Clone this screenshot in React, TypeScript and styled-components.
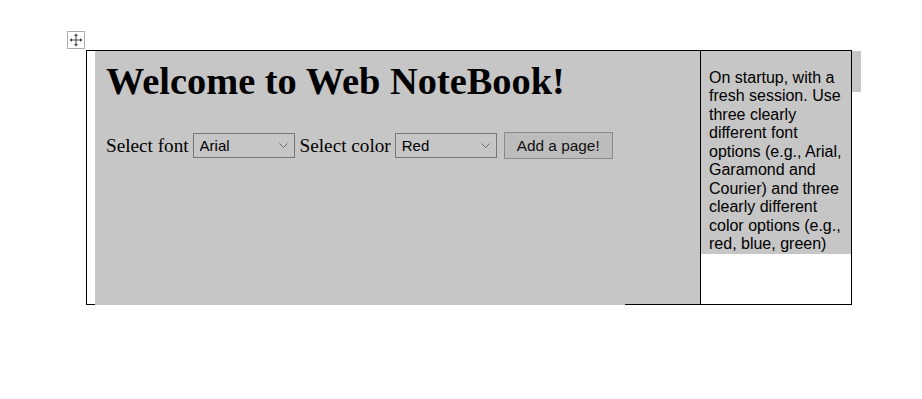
import React from 'react';
import styled, { createGlobalStyle } from 'styled-components';

const GlobalStyle = createGlobalStyle`
  body {
    margin: 8px;
    background: #ffffff;
    font-family: 'Liberation Serif', 'Times New Roman', serif;
    color: #000;
  }
`;

const panelGray = '#c6c6c6';

const Page = styled.div`
  padding: 23px 0 0 59px;
`;

const MoveHandle = styled.div`
  width: 16px;
  height: 16px;
  border: 1px solid #ababab;
  background: #fff;
  display: flex;
  align-items: center;
  justify-content: center;
`;

const Frame = styled.div`
  margin: 1px 0 0 19px;
  width: 764px;
  height: 253px;
  border: 1px solid #000;
  display: flex;
`;

const MainCell = styled.div`
  width: 605px;
  padding-left: 8px;
  display: flex;
`;

const Panel = styled.div`
  flex: 1;
  background: ${panelGray};
  display: flex;
  flex-direction: column;
`;

const Body = styled.div`
  flex: 1;
  padding: 0 11px;
`;

const Title = styled.h1`
  margin: 8px 0 0;
  font-size: 38.4px;
  font-weight: 700;
  line-height: normal;
`;

const Controls = styled.div`
  margin-top: 29px;
  display: flex;
  align-items: center;
  font-size: 19.2px;
  white-space: pre;
`;

const Label = styled.span`
  margin-right: 4px;
`;

const SelectWrap = styled.span<{ $gap: number }>`
  position: relative;
  display: inline-flex;
  margin-right: ${({ $gap }) => $gap}px;
`;

const NativeSelect = styled.select`
  appearance: none;
  width: 102px;
  height: 25px;
  padding: 0 0 0 6px;
  border: 1px solid #767676;
  border-radius: 0;
  background: transparent;
  font-family: 'Liberation Sans', Arial, sans-serif;
  font-size: 15px;
  color: #000;
`;

const Chevron = styled.svg`
  position: absolute;
  right: 7px;
  top: 10px;
  pointer-events: none;
`;

const Button = styled.button`
  width: 109px;
  height: 27px;
  border: 1px solid #8a8a8a;
  background: #bcbcbc;
  font-family: 'Liberation Sans', Arial, sans-serif;
  font-size: 15.4px;
  color: #111;
  padding: 0;
`;

const PageEdge = styled.div`
  width: 530px;
  height: 1px;
  margin-bottom: -1px;
  background: ${panelGray};
`;

const SideCell = styled.div`
  width: 150px;
  border-left: 1px solid #000;
  display: flex;
  flex-direction: column;
  align-items: flex-start;
`;

const Overhang = styled.div`
  position: relative;
  z-index: -1;
  width: 160px;
  height: 41px;
  margin-bottom: -41px;
  background: ${panelGray};
`;

const Note = styled.p`
  margin: 0;
  width: 136px;
  padding: 18px 6px 0 8px;
  background: ${panelGray};
  font-family: 'Liberation Sans', Arial, sans-serif;
  font-size: 16px;
  line-height: 18.45px;
`;

const Select: React.FC<{ options: string[]; gap: number }> = ({ options, gap }) => (
  <SelectWrap $gap={gap}>
    <NativeSelect defaultValue={options[0]}>
      {options.map((o) => (
        <option key={o}>{o}</option>
      ))}
    </NativeSelect>
    <Chevron width="9" height="5" viewBox="0 0 9 5">
      <path d="M0.5 0.5 L4.5 4.5 L8.5 0.5" fill="none" stroke="#6b6b6b" strokeWidth="1" />
    </Chevron>
  </SelectWrap>
);

export default function App() {
  return (
    <Page>
      <GlobalStyle />
      <MoveHandle>
        <svg width="14" height="14" viewBox="0 0 14 14">
          <g fill="none" stroke="#444" strokeWidth="1">
            <path d="M7 1.5 V12.5 M1.5 7 H12.5" />
          </g>
          <g fill="#444">
            <path d="M7 0.5 L9 3 H5 Z" />
            <path d="M7 13.5 L9 11 H5 Z" />
            <path d="M0.5 7 L3 5 V9 Z" />
            <path d="M13.5 7 L11 5 V9 Z" />
          </g>
        </svg>
      </MoveHandle>
      <Frame>
        <MainCell>
          <Panel>
            <Body>
              <Title>Welcome to Web NoteBook!</Title>
              <Controls>
                <Label>Select font</Label>
                <Select options={['Arial', 'Garamond', 'Courier']} gap={5} />
                <Label>Select color</Label>
                <Select options={['Red', 'Blue', 'Green']} gap={7} />
                <Button>Add a page!</Button>
              </Controls>
            </Body>
            <PageEdge />
          </Panel>
        </MainCell>
        <SideCell>
          <Overhang />
          <Note>
            On startup, with a fresh session. Use three clearly different font options (e.g., Arial,
            Garamond and Courier) and three clearly different color options (e.g., red, blue, green)
          </Note>
        </SideCell>
      </Frame>
    </Page>
  );
}
